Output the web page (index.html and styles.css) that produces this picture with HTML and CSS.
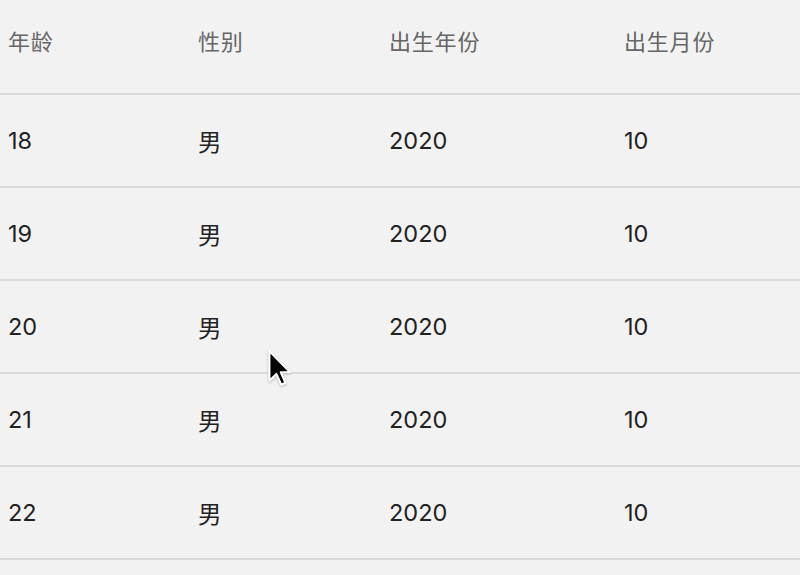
FILE: index.html
```html
<!DOCTYPE html>
<html lang="zh">
<head>
<meta charset="utf-8">
<link rel="stylesheet" href="styles.css">
</head>
<body>
<div class="table">
  <div class="row head">
    <div class="cell">年龄</div><div class="cell">性别</div><div class="cell">出生年份</div><div class="cell">出生月份</div>
  </div>
  <div class="row"><div class="cell">18</div><div class="cell">男</div><div class="cell">2020</div><div class="cell">10</div></div>
  <div class="row"><div class="cell">19</div><div class="cell">男</div><div class="cell">2020</div><div class="cell">10</div></div>
  <div class="row"><div class="cell">20</div><div class="cell">男</div><div class="cell">2020</div><div class="cell">10</div></div>
  <div class="row"><div class="cell">21</div><div class="cell">男</div><div class="cell">2020</div><div class="cell">10</div></div>
  <div class="row"><div class="cell">22</div><div class="cell">男</div><div class="cell">2020</div><div class="cell">10</div></div>
</div>
<svg class="cursor" width="28" height="38" viewBox="0 0 13 18">
  <path d="M1 1 L1 15 L4.3 11.8 L6.6 16.9 L8.6 16 L6.4 11 L10.8 11 Z" fill="#000" stroke="#fff" stroke-width="1" stroke-linejoin="round"/>
</svg>
</body>
</html>
```
FILE: styles.css
```css
html, body {
  margin: 0;
  padding: 0;
  background: #f2f2f2;
  width: 800px;
  height: 575px;
  overflow: hidden;
}
body {
  font-family: Inter, "Noto Sans CJK SC", sans-serif;
  color: #222;
  position: relative;
}
.table {
  display: flex;
  flex-direction: column;
}
.row {
  display: grid;
  grid-template-columns: 190px 191px 235px 1fr;
  padding-left: 8px;
  height: 91px;
  align-items: center;
  border-bottom: 2px solid #d9d9d9;
  font-size: 23.5px;
}
.row.head {
  height: 93px;
  align-items: start;
  font-size: 22px;
  color: #666;
  font-family: "Noto Sans CJK SC", sans-serif;
}
.row.head .cell {
  padding-top: 24px;
  letter-spacing: 0.8px;
}
.cell {
  white-space: nowrap;
}
.cursor {
  position: absolute;
  left: 267px;
  top: 349px;
  filter: drop-shadow(0 1px 1px rgba(0,0,0,0.25));
}
```
